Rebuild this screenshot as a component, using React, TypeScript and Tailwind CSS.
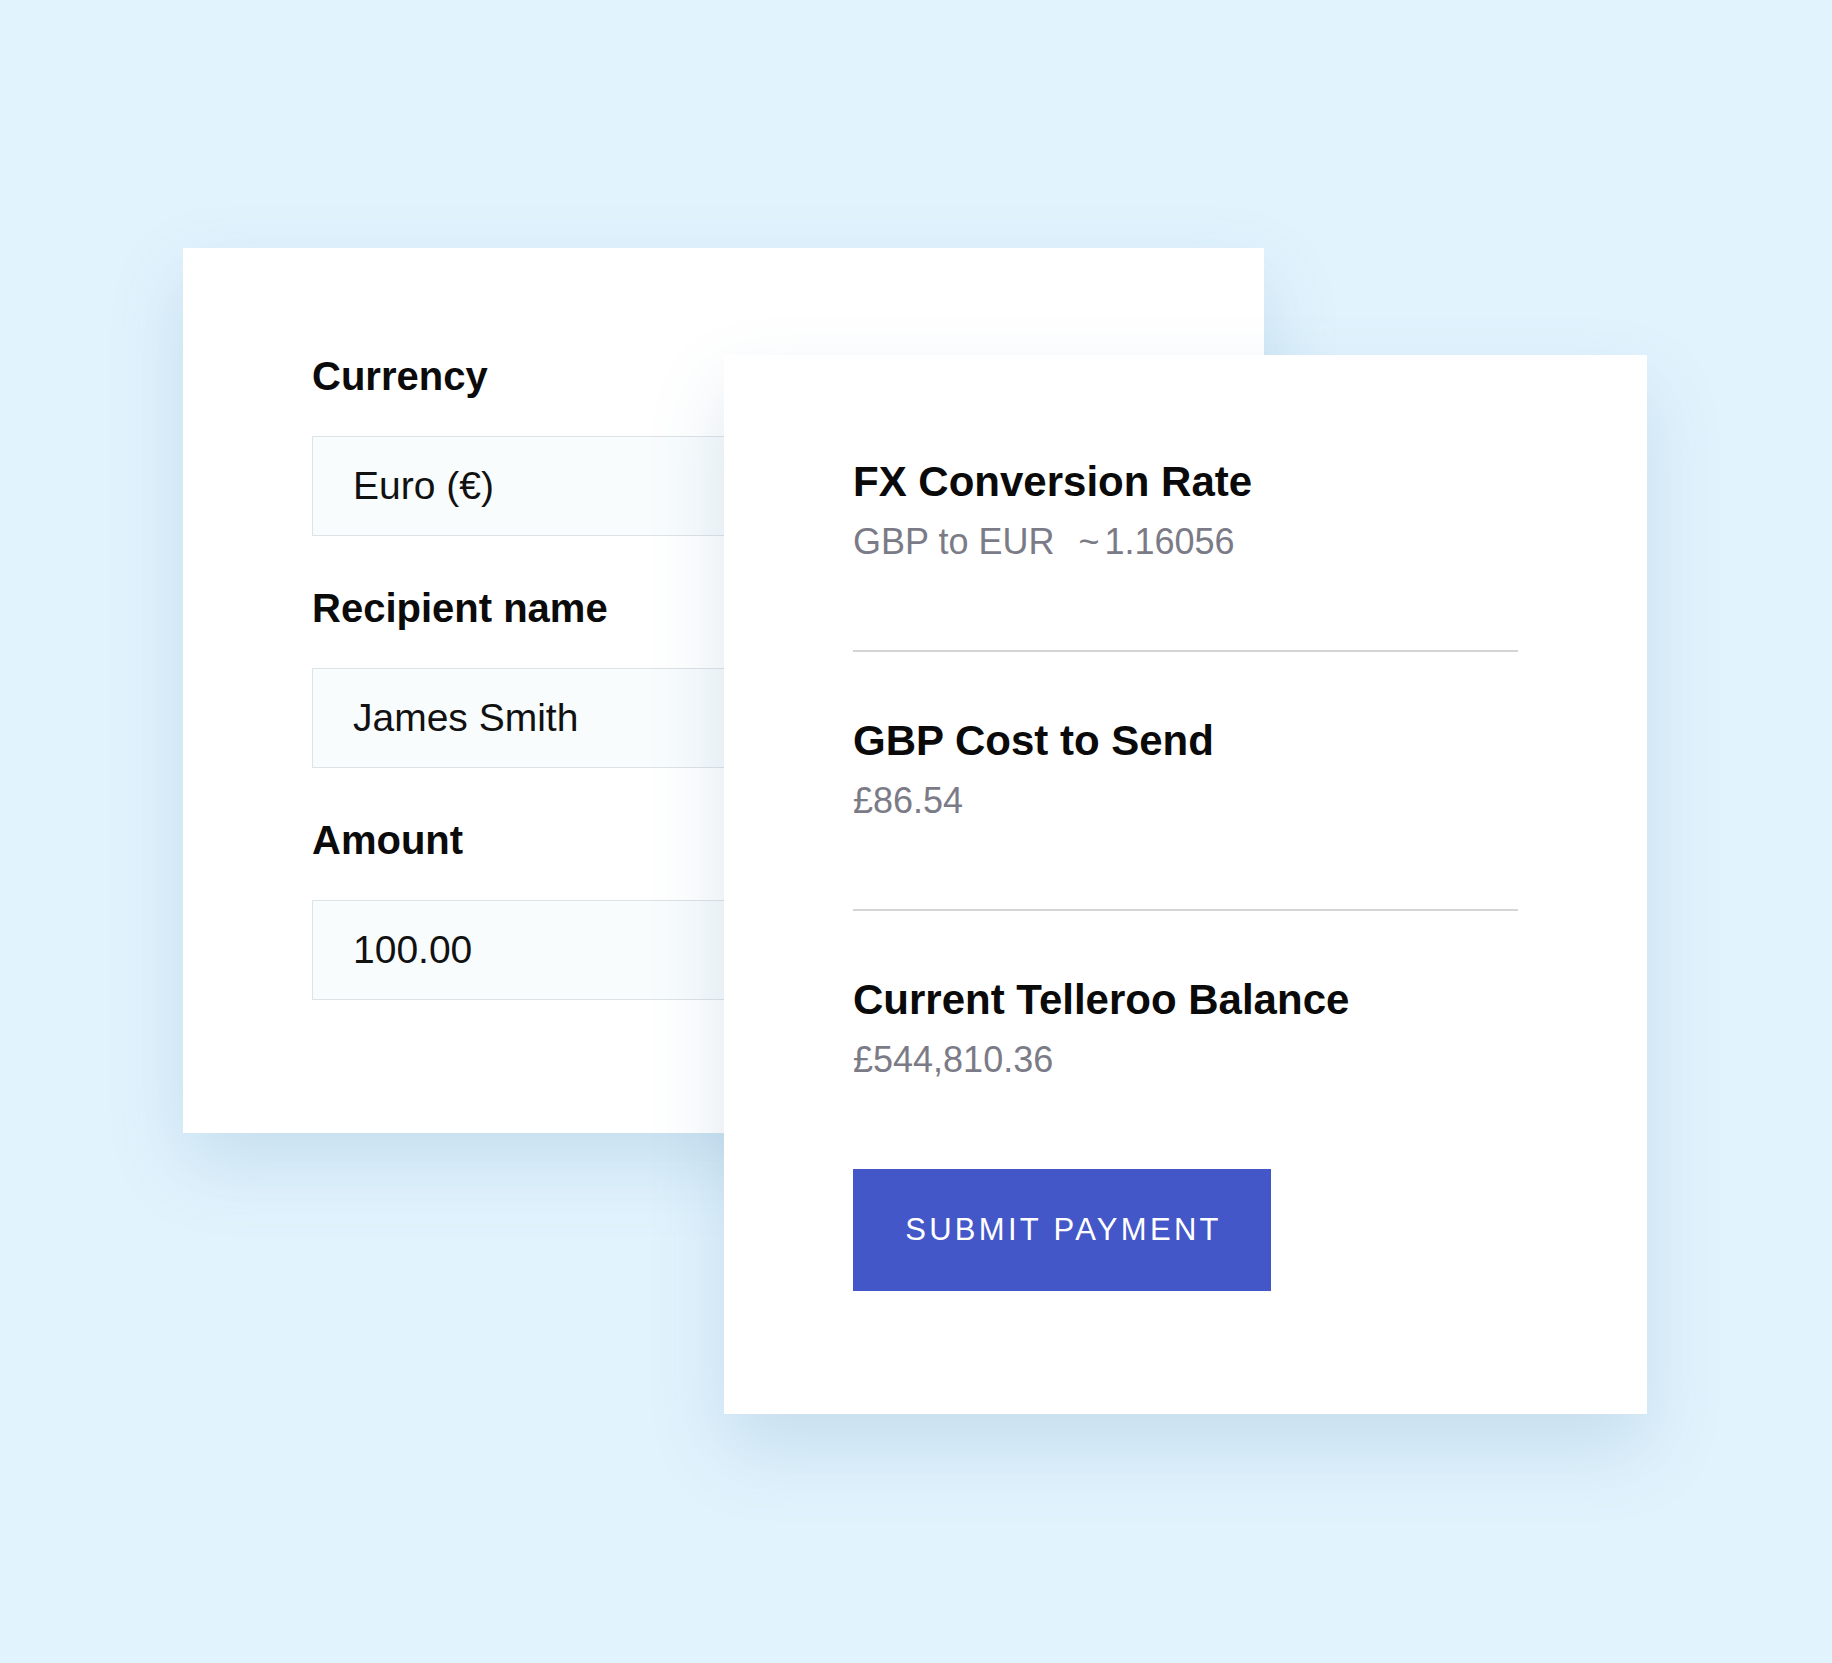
import React from "react";

const font = { fontFamily: '"Liberation Sans", Arial, sans-serif' };

function Field({ label, value, first }: { label: string; value: string; first?: boolean }) {
  return (
    <div className={first ? "" : "mt-[48px]"}>
      <div className="text-[40px] leading-[48px] font-bold text-[#0b0b0b]">{label}</div>
      <div className="mt-[36px] flex h-[100px] items-center border border-[#dde3e6] bg-[#f8fcfd] pl-[40px] text-[39px] text-[#111111]">
        {value}
      </div>
    </div>
  );
}

function Stat({ title, children, first }: { title: string; children: React.ReactNode; first?: boolean }) {
  return (
    <div className={first ? "" : "mt-[64px]"}>
      <div className="text-[42px] leading-[50px] font-bold text-[#0a0a0a]">{title}</div>
      <div className="mt-[13px] text-[36px] leading-[44px] text-[#7b7b87]">{children}</div>
    </div>
  );
}

export default function App() {
  return (
    <div className="min-h-[1663px] w-full bg-[#e1f3fd] pl-[183px] pt-[248px]" style={font}>
      <div className="grid grid-cols-[541px_540px_383px] grid-rows-[107px_778px_281px]">
        <div className="col-start-1 col-end-3 row-start-1 row-end-3 overflow-hidden bg-white pl-[129px] pr-[129px] pt-[104px] shadow-[0_30px_70px_rgba(90,140,180,0.2)]">
          <Field first label="Currency" value="Euro (€)" />
          <Field label="Recipient name" value="James Smith" />
          <Field label="Amount" value="100.00" />
        </div>
        <div className="relative z-10 col-start-2 col-end-4 row-start-2 row-end-4 bg-white px-[129px] pt-[102px] shadow-[0_35px_70px_rgba(80,130,170,0.18)]">
          <Stat first title="FX Conversion Rate">
            GBP to EUR<span className="ml-[24px]">~</span>
            <span className="ml-[5px]">1.16056</span>
          </Stat>
          <div className="mt-[86px] h-[2px] bg-[#d5d5d7]" />
          <Stat title="GBP Cost to Send">£86.54</Stat>
          <div className="mt-[86px] h-[2px] bg-[#d5d5d7]" />
          <Stat title="Current Telleroo Balance">£544,810.36</Stat>
          <button className="mt-[87px] flex h-[122px] w-[418px] items-center justify-center bg-[#4457c8] pl-[3px] text-[31px] uppercase tracking-[3.3px] text-white">
            Submit Payment
          </button>
        </div>
      </div>
    </div>
  );
}
